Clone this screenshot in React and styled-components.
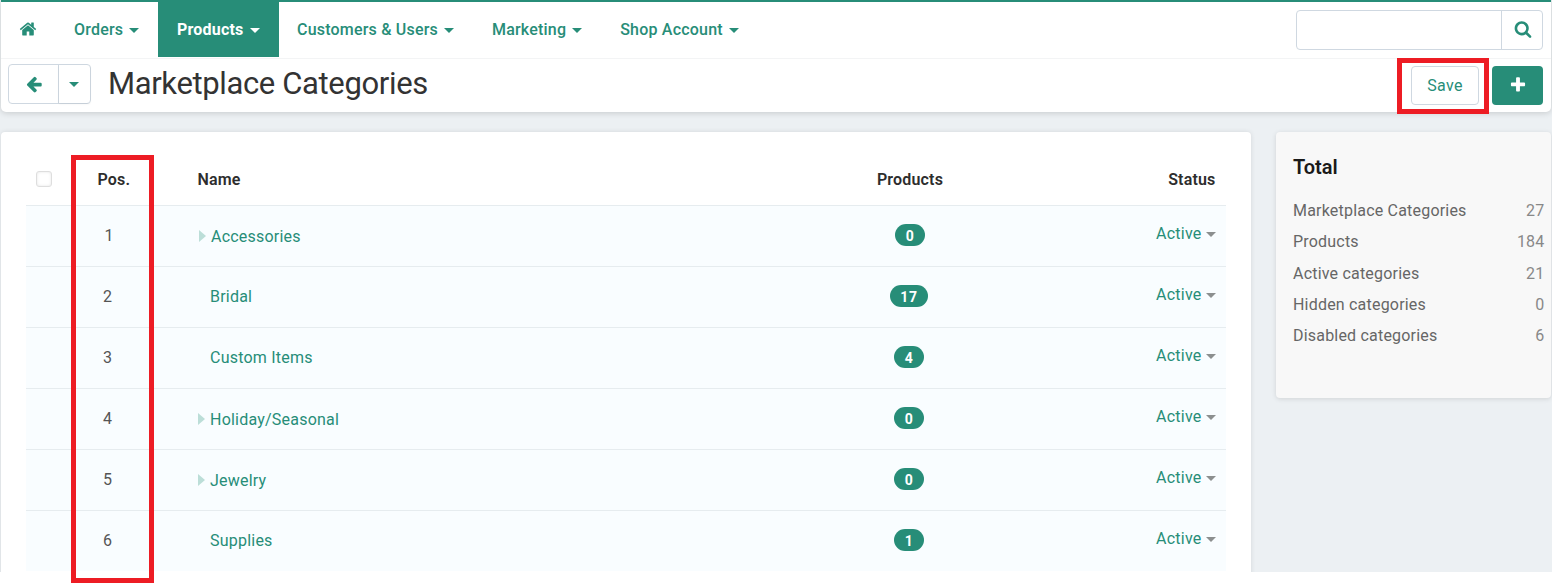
import styled, { createGlobalStyle, css } from 'styled-components'

const menu = ['Orders', 'Products', 'Customers & Users', 'Marketing', 'Shop Account']

const categories = [
    { pos: 1, name: 'Accessories', products: 0, parent: true },
    { pos: 2, name: 'Bridal', products: 17 },
    { pos: 3, name: 'Custom Items', products: 4 },
    { pos: 4, name: 'Holiday/Seasonal', products: 0, parent: true },
    { pos: 5, name: 'Jewelry', products: 0, parent: true },
    { pos: 6, name: 'Supplies', products: 1 },
]

const totals = [
    ['Marketplace Categories', 27],
    ['Products', 184],
    ['Active categories', 21],
    ['Hidden categories', 0],
    ['Disabled categories', 6],
]

const icons = {
    home: 'M1472 992v480q0 26-19 45t-45 19h-384v-384h-256v384h-384q-26 0-45-19t-19-45v-480q0-1 .5-3t.5-3l575-474 575 474q1 2 1 6zm223-69l-62 74q-8 9-21 11h-3q-13 0-21-7l-692-577-692 577q-12 8-24 7-13-2-21-11l-62-74q-8-10-7-23.500t11-21.500l719-599q32-26 76-26t76 26l244 204v-195q0-14 9-23t23-9h192q14 0 23 9t9 23v408l219 182q10 8 11 21.500t-7 23.500z',
    back: 'M1664 896v128q0 53-32.500 90.500t-84.500 37.500h-704l293 294q38 36 38 90t-38 90l-75 76q-37 37-90 37-52 0-91-37l-651-652q-37-37-37-90 0-52 37-91l651-650q38-38 91-38 52 0 90 38l75 74q38 38 38 91t-38 91l-293 293h704q52 0 84.500 37.500t32.500 90.500z',
    search: 'M1216 832q0-185-131.500-316.500t-316.500-131.500-316.500 131.500-131.500 316.500 131.500 316.500 316.500 131.500 316.500-131.500 131.500-316.500zm512 832q0 52-38 90t-90 38q-54 0-90-38l-343-342q-179 124-399 124-143 0-273.500-55.500t-225-150-150-225-55.500-273.500 55.500-273.500 150-225 225-150 273.500-55.500 273.500 55.500 225 150 150 225 55.500 273.500q0 220-124 399l343 343q37 37 37 90z',
    plus: 'M1600 736v192q0 40-28 68t-68 28h-416v416q0 40-28 68t-68 28h-192q-40 0-68-28t-28-68v-416h-416q-40 0-68-28t-28-68v-192q0-40 28-68t68-28h416v-416q0-40 28-68t68-28h192q40 0 68 28t28 68v416h416q40 0 68 28t28 68z',
}

const Icon = ({ name, size }) => (
    <svg width={size} height={size} viewBox="0 0 1792 1792" fill="currentColor">
        <path d={icons[name]} />
    </svg>
)

const App = () => {
    return (
        <Page>
            <GlobalStyle />
            <Content>
                <Header>
                    <Nav>
                        <HomeLink><Icon name="home" size={18} /></HomeLink>
                        {menu.map((item) => (
                            <NavItem key={item} $active={item === 'Products'}>
                                {item}
                                <Caret />
                            </NavItem>
                        ))}
                        <Search>
                            <SearchInput />
                            <SearchButton><Icon name="search" size={18} /></SearchButton>
                        </Search>
                    </Nav>
                    <TitleBar>
                        <BackGroup>
                            <BackButton><Icon name="back" size={18} /></BackButton>
                            <BackMenu><Caret /></BackMenu>
                        </BackGroup>
                        <h1>Marketplace Categories</h1>
                        <SaveButton>Save</SaveButton>
                        <AddButton><Icon name="plus" size={18} /></AddButton>
                    </TitleBar>
                </Header>
                <Main>
                    <Panel>
                        <TableHead>
                            <Checkbox />
                            <span>Pos.</span>
                            <span>Name</span>
                            <span className="products">Products</span>
                            <span className="status">Status</span>
                        </TableHead>
                        {categories.map((c) => (
                            <Row key={c.pos} $first={c.pos === 1}>
                                <Position $first={c.pos === 1}>{c.pos}</Position>
                                <Name $parent={c.parent}>
                                    {c.parent && <Expand />}
                                    {c.name}
                                </Name>
                                <Count><Badge>{c.products}</Badge></Count>
                                <Status>
                                    Active
                                    <Caret $color="#8c8f8f" />
                                </Status>
                            </Row>
                        ))}
                    </Panel>
                    <Sidebar>
                        <h2>Total</h2>
                        {totals.map(([label, value]) => (
                            <Total key={label}>
                                <span>{label}</span>
                                <em>{value}</em>
                            </Total>
                        ))}
                    </Sidebar>
                </Main>
            </Content>
            <SaveHighlight />
            <PosHighlight />
        </Page>
    )
}

export default App

const GlobalStyle = createGlobalStyle`
    * {
        box-sizing: border-box;
    }
    body {
        margin: 0;
        background: white;
        font-family: Roboto, "Liberation Sans", sans-serif;
        font-size: 16px;
        color: #333;
    }
`

const Page = styled.div`
    position: relative;
    width: 1552px;
    height: 587px;
    overflow: hidden;
`

const Content = styled.div`
    height: 572px;
    background: #ecf0f3;
    overflow: hidden;
`

/* 상단 */
const Header = styled.header`
    height: 112px;
    margin: 0 1px;
    background: white;
    border-top: 2px solid #278d78;
    border-radius: 0 0 5px 5px;
    box-shadow: 0 1px 6px rgba(0, 0, 0, .16);
`

const Nav = styled.nav`
    display: flex;
    height: 57px;
    border-bottom: 1px solid #f3f4f5;
    color: #278d78;
`

const HomeLink = styled.a`
    width: 54px;
    padding: 17.5px 0 0 18px;
`

const Caret = styled.i`
    width: 0;
    height: 0;
    border: 5px solid transparent;
    border-top-color: ${(props) => props.$color || 'currentColor'};
    border-bottom: 0;
`

const NavItem = styled.a`
    display: flex;
    align-items: center;
    height: 55px;
    padding: 0 19px;
    font-weight: 500;
    letter-spacing: .2px;
    ${Caret} {
        margin: 2px 0 0 6px;
    }
    ${(props) => props.$active && css`
        margin-right: -.7px;
        padding: 0 19.2px 0 18.8px;
        background: #278d78;
        color: white;
        font-weight: 700;
    `}
`

const Search = styled.div`
    display: flex;
    width: 247px;
    height: 40px;
    margin: 8px 8px 0 auto;
    border: 1px solid #cfd8e1;
    border-radius: 4px;
`

const SearchInput = styled.div`
    flex: 1;
    border-right: 1px solid #cfd8e1;
`

const SearchButton = styled.div`
    display: flex;
    align-items: center;
    justify-content: center;
    width: 40px;
    padding: 0 0 2px 1px;
`

const TitleBar = styled.div`
    display: flex;
    padding: 5px 8px 0 7px;
    h1 {
        margin: 1px 0 0 17px;
        font-size: 31px;
        line-height: 37px;
        font-weight: 400;
        letter-spacing: -.36px;
        color: #333;
    }
`

const BackGroup = styled.div`
    display: flex;
    width: 83px;
    height: 40px;
    border: 1px solid #cfd8e1;
    border-radius: 4px;
    color: #278d78;
`

const BackButton = styled.div`
    display: flex;
    align-items: center;
    justify-content: center;
    width: 50px;
    border-right: 1px solid #cfd8e1;
`

const BackMenu = styled.div`
    display: flex;
    flex: 1;
    align-items: center;
    justify-content: center;
    padding-right: 1px;
    box-shadow: 0 1px 2px rgba(0, 0, 0, .06);
`

const SaveButton = styled.div`
    width: 68px;
    height: 39px;
    margin: 2px 13px 0 auto;
    border: 1px solid #cfd8e1;
    border-radius: 4px;
    color: #278d78;
    line-height: 37px;
    text-align: center;
    letter-spacing: .3px;
`

const AddButton = styled.div`
    display: flex;
    align-items: center;
    justify-content: center;
    width: 51px;
    height: 39px;
    margin-top: 2px;
    padding-bottom: 2px;
    border-radius: 4px;
    background: #278d78;
    color: white;
`

const Main = styled.main`
    display: flex;
    align-items: flex-start;
    justify-content: space-between;
    padding: 20px 1px 0;
`

const Panel = styled.section`
    width: 1250px;
    height: 460px;
    padding: 0 25px;
    border-radius: 4px;
    background: white;
    box-shadow: 0 0 5px rgba(0, 0, 0, .1);
`

const TableHead = styled.div`
    display: grid;
    grid-template-columns: 71.5px 100px 612.5px 200px 1fr;
    height: 73px;
    padding-top: 38px;
    font-weight: 600;
    line-height: 19px;
    letter-spacing: .18px;
    color: #2d2d2d;
    .products {
        text-align: center;
    }
    .status {
        padding-right: 10.5px;
        text-align: right;
    }
`

const Checkbox = styled.div`
    width: 16px;
    height: 16px;
    margin: 1px 0 0 10px;
    border: 1px solid #dedede;
    border-radius: 3px;
    box-shadow: inset 0 0 3px #e4e4e4;
`

const Row = styled.div`
    display: grid;
    grid-template-columns: ${(props) => (props.$first ? '172px 612px 200px 1fr' : '171px 613px 198px 1fr')};
    height: 61px;
    border-top: 1px solid #e6ecef;
    background: #f9fdff;
    line-height: 20px;
    letter-spacing: .22px;
    color: #278d78;
`

const Position = styled.span`
    padding: 20px 0 0 ${(props) => (props.$first ? '78.5px' : '77px')};
    color: #555;
`

const Name = styled.span`
    display: flex;
    padding: ${(props) => (props.$parent ? '21px 0 0 1px' : '20px 0 0 13px')};
`

const Expand = styled.i`
    width: 0;
    height: 0;
    margin: 3px 5px 0 0;
    border: 6px solid transparent;
    border-left: 7px solid #bcded8;
    border-right: 0;
`

const Count = styled.span`
    padding-top: 18px;
    text-align: center;
`

const Badge = styled.b`
    display: inline-block;
    min-width: 30px;
    height: 22px;
    padding: 0 10px;
    border-radius: 11px;
    background: #278d78;
    color: white;
    font-size: 14px;
    line-height: 24px;
    letter-spacing: .6px;
`

const Status = styled.span`
    display: flex;
    justify-content: flex-end;
    padding: 18px 10px 0 0;
    ${Caret} {
        margin: 8px 0 0 4.5px;
    }
`

/* 우측 합계 */
const Sidebar = styled.aside`
    width: 275px;
    height: 266px;
    padding: 24px 6.5px 0 17px;
    border-radius: 4px;
    background: #f8f8f8;
    box-shadow: 0 1px 5px rgba(0, 0, 0, .12);
    h2 {
        margin: 0 0 21px;
        font-size: 20px;
        line-height: 23px;
        font-weight: 600;
        color: #1a1a1a;
    }
`

const Total = styled.div`
    display: flex;
    justify-content: space-between;
    height: 31.25px;
    line-height: 22px;
    letter-spacing: .2px;
    color: #666;
    em {
        font-style: normal;
        color: #888;
    }
`

/* 강조 표시 */
const Highlight = styled.div`
    position: absolute;
    border: 5px solid #ed1c24;
`

const SaveHighlight = styled(Highlight)`
    left: 1397px;
    top: 58px;
    width: 92px;
    height: 56px;
`

const PosHighlight = styled(Highlight)`
    left: 71px;
    top: 155px;
    width: 83px;
    height: 428px;
`
